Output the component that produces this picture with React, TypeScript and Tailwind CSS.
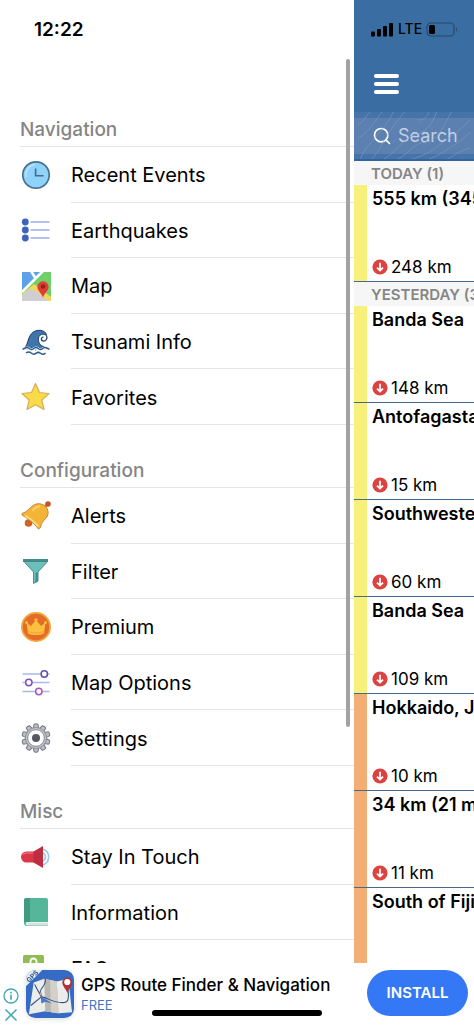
import type { ReactNode } from "react";
import { Search } from "lucide-react";

type MenuItem = { label: string; icon: ReactNode };
type Quake = { place: string; depth?: string; color: string };

const ClockIcon = () => (
  <svg viewBox="0 0 30 30" className="size-[30px]">
    <circle cx="15" cy="15" r="13.2" fill="#8fd3fb" stroke="#48718f" strokeWidth="1.7" />
    <path d="M5 17A10.5 10.5 0 0 1 14 4.5" fill="none" stroke="#b9e5ff" strokeWidth="1.4" />
    <path d="M14.6 8.5v7.3h8" fill="none" stroke="#3f6c8c" strokeWidth="1.6" />
  </svg>
);

const ListIcon = () => (
  <svg viewBox="0 0 30 30" className="size-[30px]">
    {[7, 15, 23].map((y) => (
      <g key={y}>
        <circle cx="4.3" cy={y} r="3.4" fill="#3f62bd" />
        <path d={`M9.5 ${y}h19`} stroke="#a9b5ec" strokeWidth="1.7" />
      </g>
    ))}
  </svg>
);

const MapIcon = () => (
  <svg viewBox="0 0 30 30" className="size-[30px]">
    <path d="M1 1h29v29H1z" fill="#6fcf69" />
    <path d="M1 1h20L1 21z" fill="#5da2e6" />
    <path d="M1 23 13 13l17 13v4H1z" fill="#f6d655" />
    <path d="M1 24l7-6c6 0 8 3 13 7l7 5H1z" fill="#cfcfd2" />
    <path d="M22 0 1 21M10 0l5 8" fill="none" stroke="#fff" strokeWidth="2.6" />
    <path d="M22 26.5c-1-4-5.6-6.6-5.6-10.6a5.6 5.6 0 0 1 11.2 0c0 4-4.6 6.6-5.6 10.6z" fill="#e03c35" />
    <circle cx="22" cy="15.5" r="2.2" fill="#8d2421" />
  </svg>
);

const WaveIcon = () => (
  <svg viewBox="0 0 30 30" className="size-[30px]">
    <path
      d="M3 21.5C8 18 6 5.5 16 3.5c5-1 9.5 1.5 9.5 5-2-1.5-4.5-2-6.5-.3-3 3-1.5 8.5 1.5 10.3l4.5 2.5-3 1.5-3.5-1.5-4 2-4-2-3.5 1.5z"
      fill="#3e75ad"
      stroke="#22405f"
      strokeWidth="1"
    />
    <path d="M25.5 8.5c1.3 3-.8 6-3.3 5.5-2.7-.5-2.2-4.2.3-3.8" fill="none" stroke="#294b6d" strokeWidth="1.3" />
    <path
      d="M1.5 22.5c2 0 2.5-1.5 4.5-1.5s2.5 2 4.5 2 2.5-2 4.5-2 2.5 2 4.5 2 2.5-2 4.5-2 2.5 1.5 4.5 1.5"
      fill="none"
      stroke="#fff"
      strokeWidth="3"
    />
    <path
      d="M1.5 22c2 0 2.5-1.5 4.5-1.5s2.5 2 4.5 2 2.5-2 4.5-2 2.5 2 4.5 2 2.5-2 4.5-2 2.5 1.5 4.5 1.5M5 26c2-1.5 4-1 5.5.3s3 1.2 4.5 0 3-1.3 4.5 0 3.5 1.2 5-.3"
      fill="none"
      stroke="#2c5f8e"
      strokeWidth="1.5"
    />
  </svg>
);

const StarIcon = () => (
  <svg viewBox="0 0 30 30" className="size-[30px]">
    <path
      d="M14.5 1.5 18.5 10.5 28 11.5 20.8 18 23 27.5 14.5 22.8 6 27.5 8.2 18 1 11.5 10.5 10.5z"
      fill="#f8db49"
      stroke="#d9ac58"
      strokeWidth="1.2"
      strokeLinejoin="round"
    />
  </svg>
);

const BellIcon = () => (
  <svg viewBox="0 0 30 30" className="size-[30px]">
    <path d="M23 6.5 26.5 3.5" stroke="#d99235" strokeWidth="3" />
    <circle cx="27" cy="3" r="2.8" fill="#c4542f" />
    <circle cx="7.5" cy="22" r="3.8" fill="#cf6228" />
    <path
      d="M1 12.5C6 11 8 8 11.5 4.8 16 1.5 21.5 2.5 24.5 5.5S28 13 25.5 16.5C22 20.5 20 22 19.5 26.5L17.5 28C13 22 7 17.5 1 14z"
      fill="#f4b437"
      stroke="#c98238"
      strokeWidth="1"
    />
    <path d="M4 14.5c6 3.5 10 7 13.5 11" fill="none" stroke="#fbe083" strokeWidth="1.8" />
    <path d="M11.5 10c2-3 4.5-5 7.5-4.5" fill="none" stroke="#fbd268" strokeWidth="2" />
  </svg>
);

const FilterIcon = () => (
  <svg viewBox="0 0 30 30" className="size-[30px]">
    <path d="M2.5 5h24.5L17 16v9l-4.5 2.5V16z" fill="#6ac0b8" stroke="#4a918f" strokeWidth="1" />
    <path d="M14.5 17v10l2.5-2v-9z" fill="#3f8f91" />
    <path d="M2 3h25v3H2z" fill="#45898b" />
  </svg>
);

const CrownIcon = () => (
  <svg viewBox="0 0 30 30" className="size-[30px]">
    <circle cx="15" cy="15" r="14.1" fill="#e46c28" stroke="#f0a63a" strokeWidth="1.8" />
    <path d="M5.5 10.5 10 14l5-6 5 6 4.5-3.5-1.5 11c-4 2-12 2-16 0z" fill="#f9c13f" />
    <circle cx="5.5" cy="10.5" r="1.5" fill="#f9c13f" />
    <circle cx="15" cy="8" r="1.7" fill="#f9c13f" />
    <circle cx="24.5" cy="10.5" r="1.5" fill="#f9c13f" />
    <path d="M7 19.5c4 2 12 2 16 0" fill="none" stroke="#efa135" strokeWidth="1" />
  </svg>
);

const SlidersIcon = () => (
  <svg viewBox="0 0 30 30" className="size-[30px]">
    <path d="M1.5 6h27M1.5 14.5h27M1.5 23.5h27" stroke="#a7b9ec" strokeWidth="1.6" />
    <circle cx="23.3" cy="6" r="3.2" fill="#fff" stroke="#5a50b4" strokeWidth="1.5" />
    <circle cx="7.8" cy="14.5" r="3.2" fill="#fff" stroke="#8151b8" strokeWidth="1.5" />
    <circle cx="17.8" cy="23.5" r="3.2" fill="#fff" stroke="#ad55bd" strokeWidth="1.5" />
  </svg>
);

const GearIcon = () => (
  <svg viewBox="0 0 30 30" className="size-[30px]">
    {[0, 36, 72, 108, 144, 180, 216, 252, 288, 324].map((angle) => (
      <path
        key={angle}
        d="M12.3 5.5 13 1.2q2-1 4 0l.7 4.3z"
        fill="#bbbcc4"
        stroke="#777985"
        strokeWidth="1"
        transform={`rotate(${angle} 15 15)`}
      />
    ))}
    <circle cx="15" cy="15" r="10.5" fill="#c4c5cc" stroke="#858792" strokeWidth=".8" />
    <circle cx="15" cy="15" r="8.4" fill="#fff" stroke="#868893" strokeWidth="1" />
    <circle cx="15" cy="15" r="4" fill="#575763" />
  </svg>
);

const MegaphoneIcon = () => (
  <svg viewBox="0 0 30 30" className="size-[30px]">
    <path d="M22 7a8.500 8.500 0 0 1 0 16" fill="none" stroke="#9cc8ea" strokeWidth="1.6" />
    <path d="M22 11a4.500 4.500 0 0 1 0 8" fill="none" stroke="#9cc8ea" strokeWidth="1.6" />
    <path d="M5.5 9.5H14v11H5.5a5.5 5.5 0 0 1 0-11z" fill="#d9364a" />
    <path d="M12.5 9.5 22 4v22l-9.5-5.5z" fill="#be2c40" />
    <path d="M2 13q1-2 4-2h6" fill="none" stroke="#ec6675" strokeWidth="1.4" />
  </svg>
);

const BookIcon = () => (
  <svg viewBox="0 0 30 30" className="size-[30px]">
    <path d="M5.5 1H25a2 2 0 0 1 2 2v26H6a3 3 0 0 1-3-3V3.5A2.5 2.5 0 0 1 5.5 1z" fill="#56b69a" />
    <path d="M5.5 1H9v24H3V3.5A2.5 2.5 0 0 1 5.5 1z" fill="#419980" />
    <path d="M27 25H6.5a1.7 1.7 0 0 0 0 3.4H27z" fill="#edf2f1" />
    <path d="M7 27h20" stroke="#b7c7c4" strokeWidth=".8" />
  </svg>
);

const HelpIcon = () => (
  <svg viewBox="0 0 30 30" className="size-[30px]">
    <rect x="2" y="2" width="21" height="26" rx="1.5" fill="#8fbd52" />
    <path d="M9.5 13V8.500a3 3 0 0 1 6 0V13" fill="none" stroke="#fff" strokeWidth="1.8" />
  </svg>
);

const DepthIcon = () => (
  <svg viewBox="0 0 16 16" className="size-4 shrink-0">
    <circle cx="8" cy="8" r="7.6" fill="#dc4340" />
    <path d="M8 3.8v7.8M5 8.6l3 3 3-3" fill="none" stroke="#fff" strokeWidth="1.7" />
  </svg>
);

const AppLogo = () => (
  <svg viewBox="0 0 50 50" className="size-12 shrink-0 drop-shadow-sm">
    <clipPath id="logo-shape">
      <rect width="50" height="50" rx="10" />
    </clipPath>
    <g clipPath="url(#logo-shape)">
      <path d="M0 0h50v50H0z" fill="#356bc4" />
      <path d="M8 13 19 9l13 3 12-3 4 35-14 1-14-2L3 46z" fill="#ececea" />
      <path d="M19 9l13 3 2 33-14-2z" fill="#b8b8b2" />
      <path d="M25 10.5l7 1.5 2 33-8-1z" fill="#d2d0c8" />
      <path
        d="M9 15 16 28 5 37M20 9c2 9-9 10-4 19 7 1 12 6 22 6 8 0 6-7 6-13"
        fill="none"
        stroke="#334e87"
        strokeWidth="1.1"
      />
      <path d="M15 23l3 6 9 6-7-2-4 2z" fill="#4779c5" />
      <circle cx="15.5" cy="25" r="1.5" fill="#e49a91" />
      <path d="M0 0h17L0 17z" fill="#e5eff5" />
      <text x="7" y="9" transform="rotate(-45 7 7)" className="fill-[#31598e] text-[7px] font-bold" textAnchor="middle">
        GPS
      </text>
      <path
        d="M43 22c-1-3-4.5-5-4.5-9a4.5 4.5 0 0 1 9 0c0 4-3.5 6-4.5 9z"
        fill="#b33135"
        stroke="#b33135"
        strokeWidth="1.5"
      />
      <circle cx="43" cy="12.5" r="3.2" fill="#fff" />
    </g>
  </svg>
);

const sections: { title: string; listHeight: string; items: MenuItem[] }[] = [
  {
    title: "Navigation",
    listHeight: "h-[278px]",
    items: [
      { label: "Recent Events", icon: <ClockIcon /> },
      { label: "Earthquakes", icon: <ListIcon /> },
      { label: "Map", icon: <MapIcon /> },
      { label: "Tsunami Info", icon: <WaveIcon /> },
      { label: "Favorites", icon: <StarIcon /> },
    ],
  },
  {
    title: "Configuration",
    listHeight: "h-[278px]",
    items: [
      { label: "Alerts", icon: <BellIcon /> },
      { label: "Filter", icon: <FilterIcon /> },
      { label: "Premium", icon: <CrownIcon /> },
      { label: "Map Options", icon: <SlidersIcon /> },
      { label: "Settings", icon: <GearIcon /> },
    ],
  },
  {
    title: "Misc",
    listHeight: "h-[167px]",
    items: [
      { label: "Stay In Touch", icon: <MegaphoneIcon /> },
      { label: "Information", icon: <BookIcon /> },
      { label: "FAQ", icon: <HelpIcon /> },
    ],
  },
];

const today: Quake[] = [{ place: "555 km (345 mi)", depth: "248 km", color: "bg-[#f7f07b]" }];

const yesterday: Quake[] = [
  { place: "Banda Sea", depth: "148 km", color: "bg-[#f7f07b]" },
  { place: "Antofagasta", depth: "15 km", color: "bg-[#f7f07b]" },
  { place: "Southwestern", depth: "60 km", color: "bg-[#f7f07b]" },
  { place: "Banda Sea", depth: "109 km", color: "bg-[#f7f07b]" },
  { place: "Hokkaido, Japan", depth: "10 km", color: "bg-[#f3ae76]" },
  { place: "34 km (21 mi)", depth: "11 km", color: "bg-[#f3ae76]" },
  { place: "South of Fiji", color: "bg-[#f3ae76]" },
];

const Drawer = () => (
  <nav className="relative min-w-0 flex-1 overflow-hidden bg-white">
    <div className="flex h-[84px] items-start pt-4 pl-[34px] text-[19px] leading-7 font-semibold">12:22</div>
    {sections.map((section) => (
      <section key={section.title}>
        <h2 className="ml-5 flex h-[63px] items-end border-b border-[#e4e4e4] pb-[2px] text-[19px] leading-7 font-medium text-[#858585]">
          {section.title}
        </h2>
        <ul className={`grid auto-rows-fr pl-[21px] ${section.listHeight}`}>
          {section.items.map((item) => (
            <li key={item.label}>
              <a href="#" className="flex h-full items-center gap-5">
                {item.icon}
                <span className="flex h-full flex-1 items-center border-b border-[#e4e4e4] pt-[2px] text-xl leading-7">
                  {item.label}
                </span>
              </a>
            </li>
          ))}
        </ul>
      </section>
    ))}
    <div className="absolute top-[59px] right-1 h-[668px] w-1 rounded-full bg-[#a2a2a4]" />
  </nav>
);

const QuakeGroup = ({ title, quakes }: { title: string; quakes: Quake[] }) => (
  <section>
    <h2 className="h-6 bg-[#f6f6f7] pt-px pl-[17px] text-[15px] leading-6 font-semibold whitespace-nowrap text-[#858585]">
      {title}
    </h2>
    <ul>
      {quakes.map((quake, index) => (
        <li key={index} className="flex h-[97px] border-b border-[#47698d]">
          <div className={`w-[13px] shrink-0 ${quake.color}`} />
          <div className="flex flex-1 flex-col justify-between pb-[2px] pl-[5px] whitespace-nowrap">
            <h3 className="text-lg leading-7 font-semibold">{quake.place}</h3>
            {quake.depth && (
              <p className="flex items-center gap-[3px] text-[17px] leading-6">
                <DepthIcon />
                {quake.depth}
              </p>
            )}
          </div>
        </li>
      ))}
    </ul>
  </section>
);

const EventsPanel = () => (
  <main className="w-[120px] shrink-0 overflow-hidden bg-white">
    <header className="bg-[#3a6ea3]">
      <div className="flex h-[58px] items-center gap-1 pl-[17px]">
        <svg viewBox="0 0 23 15" className="h-[15px] w-[23px]">
          <rect y="9.5" width="4" height="5" rx="1" />
          <rect x="6" y="7" width="4" height="7.5" rx="1" />
          <rect x="12" y="4" width="4" height="10.5" rx="1" />
          <rect x="18" y="1" width="4" height="13.5" rx="1" />
        </svg>
        <span className="text-sm leading-5 font-medium">LTE</span>
        <svg viewBox="0 0 32 15" className="h-[15px] w-8">
          <rect x="1" y="1" width="27" height="13" rx="4" fill="none" stroke="#24496e" strokeWidth="1.2" />
          <rect x="3" y="3" width="6" height="9" rx="1.5" />
          <path d="M30 5q2 2.500 0 5z" fill="#24496e" />
        </svg>
      </div>
      <div className="flex h-[54px] items-center pb-[2px] pl-5">
        <button type="button" aria-label="Menu" className="flex flex-col gap-1">
          <span className="h-1 w-[25px] rounded-full bg-white" />
          <span className="h-1 w-[25px] rounded-full bg-white" />
          <span className="h-1 w-[25px] rounded-full bg-white" />
        </button>
      </div>
      <div className="relative h-[49px] overflow-hidden border-b-2 border-[#2f659c] bg-[#4474a8] pt-[6px]">
        <label className="flex h-9 items-center gap-[6px] bg-[#5c80b0] pl-[18px]">
          <Search className="size-5 shrink-0 text-white" strokeWidth={2} />
          <input
            type="search"
            aria-label="Search"
            placeholder="Search"
            className="w-full min-w-0 bg-transparent text-lg leading-6 text-white outline-none placeholder:text-[#c3d0e3]"
          />
        </label>
        <svg
          viewBox="0 0 120 50"
          className="pointer-events-none absolute inset-0 size-full opacity-80"
          fill="none"
          stroke="#7c9cc3"
          strokeWidth=".8"
        >
          <path d="M0 14C7 10 9 4 13 0M0 28C12 22 18 10 26 0M3 50C8 34 28 22 38 0M15 50C25 40 30 22 50 0M28 50C40 44 48 28 62 24S80 10 84 0M42 50C55 46 56 34 72 32S92 12 100 0M58 50C70 47 78 42 86 36S104 24 120 8M76 50C88 46 98 38 106 33S115 24 120 22M96 50C104 45 112 40 120 38M64 8C70 10 74 5 76 0" />
        </svg>
      </div>
    </header>
    <QuakeGroup title="TODAY (1)" quakes={today} />
    <QuakeGroup title="YESTERDAY (3)" quakes={yesterday} />
  </main>
);

const AdBanner = () => (
  <footer className="relative flex h-[63px] shrink-0 items-start bg-white pt-[7px] pr-[6px] pl-[3px]">
    <div className="flex flex-col gap-[3px] pt-[18px]">
      <button type="button" aria-label="Ad info" className="h-4">
        <svg viewBox="0 0 16 16" className="size-4" fill="none" stroke="#45a6b4" strokeWidth="1.3">
          <circle cx="8" cy="8" r="7" />
          <path d="M8 6.8v5M8 3.8v1.6" strokeWidth="1.6" />
        </svg>
      </button>
      <button type="button" aria-label="Close ad" className="h-4">
        <svg viewBox="0 0 16 16" className="size-4" fill="none" stroke="#45a6b4" strokeWidth="1.5">
          <path d="M2.5 2.5l11 11M13.5 2.5l-11 11" />
        </svg>
      </button>
    </div>
    <div className="pl-[7px]">
      <AppLogo />
    </div>
    <div className="min-w-0 flex-1 pt-[2px] pl-[7px] whitespace-nowrap">
      <p className="text-[17px] leading-[26px] font-medium">GPS Route Finder &amp; Navigation</p>
      <p className="text-[13px] leading-[14px] text-[#4475c4]">FREE</p>
    </div>
    <button
      type="button"
      className="h-[46px] w-[101px] shrink-0 rounded-full bg-[#3478f6] text-[15px] font-semibold text-white"
    >
      INSTALL
    </button>
    <div className="absolute bottom-[10px] left-1/2 h-[6px] w-[170px] -translate-x-1/2 rounded-full bg-black" />
  </footer>
);

const App = () => {
  return (
    <div className="flex h-screen flex-col overflow-hidden bg-white font-[Inter,'Liberation_Sans',sans-serif] text-black">
      <div className="flex min-h-0 flex-1">
        <Drawer />
        <EventsPanel />
      </div>
      <AdBanner />
    </div>
  );
};

export default App;
